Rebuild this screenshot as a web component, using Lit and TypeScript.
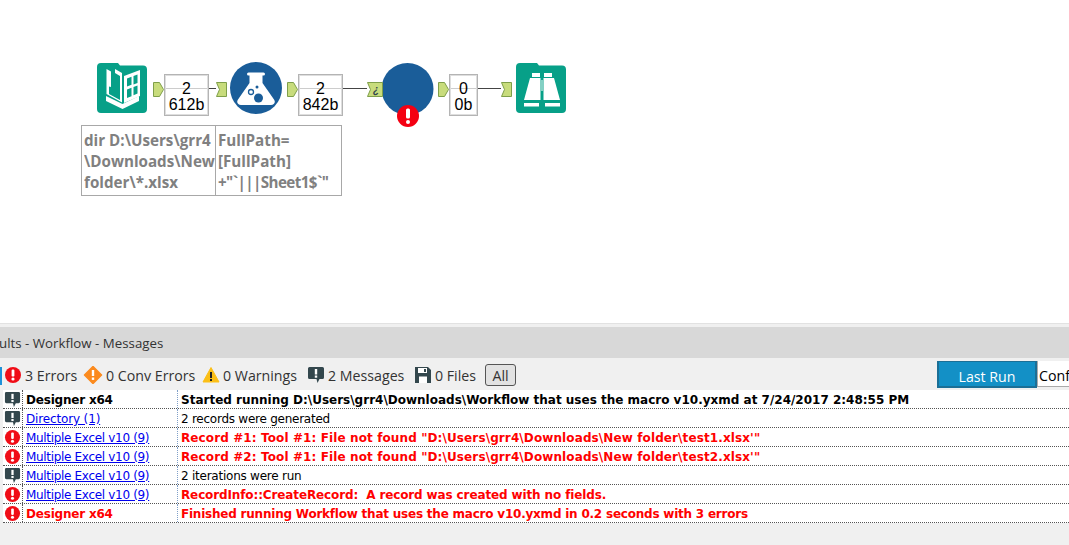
import { LitElement, html, css, svg } from "lit";
import { customElement } from "lit/decorators.js";

const errorIcon = svg`<svg class="ico" width="18" height="18" viewBox="0 0 18 18"><circle cx="9" cy="9" r="8" fill="#f00d17"/><rect x="7.6" y="3.6" width="2.8" height="7" rx="1.2" fill="#fff"/><circle cx="9" cy="13" r="1.6" fill="#fff"/></svg>`;
const msgIcon = svg`<svg class="ico" width="18" height="18" viewBox="0 0 18 18"><path d="M2.500 1h13A1.500 1.500 0 0 1 17 2.500v9a1.500 1.500 0 0 1-1.500 1.500H12.500L10.500 17 9.500 13H2.500A1.500 1.500 0 0 1 1 11.500v-9A1.500 1.500 0 0 1 2.500 1z" fill="#33474d"/><rect x="7.800" y="3" width="2.400" height="5.500" fill="#fff"/><rect x="7.800" y="9.500" width="2.400" height="2.200" fill="#fff"/></svg>`;
const diamondIcon = svg`<svg class="ico" width="20" height="18" viewBox="0 0 20 18"><path d="M10 0.500 18.500 9 10 17.500 1.500 9z" fill="#fb8a1e" stroke="#fb8a1e" stroke-width="1.500" stroke-linejoin="round"/><rect x="8.800" y="4" width="2.400" height="6" fill="#fff"/><rect x="8.800" y="11.500" width="2.400" height="2.400" fill="#fff"/></svg>`;
const warnIcon = svg`<svg class="ico" width="18" height="18" viewBox="0 0 18 18"><path d="M9 1.500 17 16H1z" fill="#fbbf16" stroke="#fbbf16" stroke-linejoin="round"/><rect x="8" y="6" width="2" height="6" fill="#222"/><rect x="8" y="13" width="2" height="2" fill="#222"/></svg>`;
const floppyIcon = svg`<svg class="ico" width="18" height="18" viewBox="0 0 18 18"><path d="M1 1h13l3 3v13H1z" fill="#33474d"/><rect x="4" y="2" width="9" height="5" fill="#fff"/><rect x="10" y="3" width="2" height="3" fill="#33474d"/><rect x="5" y="10.500" width="8" height="6.500" fill="#fff"/></svg>`;

const outShape = svg`<svg width="11" height="15" viewBox="0 0 11 15"><path d="M.5.500h6l4 7-4 7h-6z" fill="#c8dc7c" stroke="#7f9f4a"/></svg>`;
const inShape = svg`<svg width="11" height="15" viewBox="0 0 11 15"><path d="M.5.500h10v14H.5l3-7z" fill="#c8dc7c" stroke="#7f9f4a"/></svg>`;
const inWide = svg`<svg width="16" height="15" viewBox="0 0 16 15"><path d="M.5.500h15v14H.5l3-7z" fill="#c8dc7c" stroke="#7f9f4a"/><text x="6" y="11" font-size="10" font-weight="700" font-style="italic" font-family="Liberation Sans" fill="#33474d">¿</text></svg>`;

const cardPath = "M5 1h17l2 2.500h23a4 4 0 0 1 4 4V47a4 4 0 0 1-4 4H5a4 4 0 0 1-4-4V5a4 4 0 0 1 4-4z";

const rows = [
  { icon: "m", tool: "Designer x64", link: false, cls: "b", tls: -0.2, ls: 0, text: "Started running D:\\Users\\grr4\\Downloads\\Workflow that uses the macro v10.yxmd at 7/24/2017 2:48:55 PM" },
  { icon: "m", tool: "Directory (1)", link: true, cls: "", tls: -0.15, ls: -0.25, text: "2 records were generated" },
  { icon: "e", tool: "Multiple Excel v10 (9)", link: true, cls: "r", tls: -0.32, ls: 0.11, text: "Record #1: Tool #1: File not found \"D:\\Users\\grr4\\Downloads\\New folder\\test1.xlsx'\"" },
  { icon: "e", tool: "Multiple Excel v10 (9)", link: true, cls: "r", tls: -0.32, ls: 0.11, text: "Record #2: Tool #1: File not found \"D:\\Users\\grr4\\Downloads\\New folder\\test2.xlsx'\"" },
  { icon: "m", tool: "Multiple Excel v10 (9)", link: true, cls: "", tls: -0.32, ls: -0.24, text: "2 iterations were run" },
  { icon: "e", tool: "Multiple Excel v10 (9)", link: true, cls: "r", tls: -0.32, ls: -0.125, text: "RecordInfo::CreateRecord:\u00a0 A record was created with no fields." },
  { icon: "e", tool: "Designer x64", link: false, cls: "r", tls: -0.2, ls: -0.22, text: "Finished running Workflow that uses the macro v10.yxmd in 0.2 seconds with 3 errors" },
];

const anchors = [
  { x: 153, shape: outShape },
  { x: 216, shape: inShape },
  { x: 287, shape: outShape },
  { x: 367, shape: inWide },
  { x: 438, shape: outShape },
  { x: 501, shape: inShape },
];
const counts = [
  { x: 164, w: 45, a: "2", b: "612b" },
  { x: 298, w: 45, a: "2", b: "842b" },
  { x: 449, w: 29, a: "0", b: "0b" },
];
const wires = [
  { x: 208, w: 8 },
  { x: 342, w: 25 },
  { x: 477, w: 24 },
];

@customElement("app-root")
export class AppRoot extends LitElement {
  static styles = css`
    :host { display: block; width: 1069px; height: 545px; overflow: hidden; background: #f0f0f0; font-family: "Open Sans", "Noto Sans", sans-serif; color: #222; }
    .canvas { position: relative; height: 323px; background: #fff; overflow: hidden; }
    .tool { position: absolute; display: block; }
    .book { left: 96px; top: 62px; }
    .flask { left: 230px; top: 62px; }
    .macro { left: 381px; top: 62px; }
    .bino { left: 515px; top: 62px; }
    .wire { position: absolute; top: 88px; height: 1px; background: #444; }
    .count { position: absolute; height: 42px; top: 74px; box-sizing: border-box; border: 1px solid #b4b4b4; box-shadow: inset 0 0 0 1px #dedede; font: 16px/16px "Liberation Sans", sans-serif; color: #000; text-align: center; padding-top: 6px; background: linear-gradient(#0000 13px, #ccc 13px, #ccc 14px, #0000 14px); }
    .anchor { position: absolute; top: 82px; display: block; height: 15px; }
    .anchor svg { display: block; }
    .note { position: absolute; top: 125px; height: 71px; box-sizing: border-box; border: 1px solid #a8a8a8; font: 700 15.2px/21px "Open Sans", sans-serif; color: #808080; padding: 4px 0 0 2px; overflow: hidden; }
    .note span { display: block; white-space: nowrap; }
    .note .tight { letter-spacing: -0.6px; }
    .n1 { left: 81px; width: 145px; border-right: none; }
    .n1 .clip { width: 133px; overflow: hidden; }
    .n2 { left: 215px; width: 127px; }
    .divider { height: 4px; background: #f0f0f0; border-top: 1px solid #e2e2e2; box-sizing: border-box; }
    .title { height: 31px; background: #d8d8d8; display: flex; align-items: center; font-size: 13.3px; color: #333; white-space: nowrap; overflow: hidden; }
    .title span { margin-left: -1px; }
    .toolbar { position: relative; height: 32px; box-sizing: border-box; padding: 6px 0 0 4px; display: flex; align-items: flex-start; font-size: 14.2px; color: #333; white-space: nowrap; }
    .toolbar .accent { position: absolute; left: 0; top: 9px; width: 2px; height: 18px; background: #1e90d8; }
    .item { display: flex; align-items: center; gap: 3px; height: 21px; }
    .item span { position: relative; top: 1px; }
    .i1 { width: 79px; }
    .i2 { width: 119px; }
    .i3 { width: 105px; }
    .i4 { width: 107px; }
    .i5 { width: 62px; }
    .ico { display: block; flex: none; }
    .all { box-sizing: border-box; height: 22px; width: 31px; margin-left: 9px; border: 1px solid #555; border-radius: 3px; background: #e2e2e2; text-align: center; line-height: 21px; }
    .spacer { flex: 1; }
    .lastrun { box-sizing: border-box; width: 100px; height: 27px; margin-top: -3px; background: #1390c6; border: 2px solid #1b6f96; border-top-width: 1px; color: #fff; text-align: center; line-height: 30px; }
    .conf { box-sizing: border-box; width: 32px; height: 26px; margin-top: -3px; background: #fff; border-bottom: 1px solid #aaa; border-left: 1px solid #aaa; color: #000; padding-left: 1px; line-height: 30px; overflow: hidden; }
    .table { margin-left: 3px; background: #fff; }
    .row { display: grid; grid-template-columns: 20px 155px 1fr; height: 19px; box-sizing: border-box; border-bottom: 1px dotted #555; font: 12px/18px "DejaVu Sans", sans-serif; white-space: nowrap; color: #000; }
    .cell { padding: 1px 0 0 3px; box-sizing: border-box; height: 18px; }
    .c0 { padding: 0; display: flex; align-items: center; justify-content: center; border-right: 1px dotted #555; }
    .c0 .ico { width: 17px; height: 17px; }
    .c1 { border-right: 1px dotted #7f9fc8; }
    .link { color: #0000ee; text-decoration: underline; }
    .b { font-weight: 700; }
    .r { font-weight: 700; color: #f00; }
  `;

  render() {
    return html`
      <div class="canvas">
        ${wires.map((w) => html`<div class="wire" style="left:${w.x}px;width:${w.w}px"></div>`)}
        <svg class="tool book" width="53" height="52" viewBox="0 0 53 52">
          <path d="${cardPath}" fill="#07a088"/>
          <path d="M10 34 26.500 42 43 34v5L26.500 47 10 39z" fill="#fff"/>
          <path d="M10.500 7 15 9.500V25l-2-.5V32l11 6V14l-5-3V7l7 4v29.500L10.500 32z" fill="#fff"/>
          <path d="M28 14 44 8v26l-16 7z" fill="#fff"/>
          <path d="M31 16.500l4.500-1.700v8l-4.500 1.800zM37.500 14l4-1.500v8.500l-4 1.500zM31 27.500l4.500-1.800v8.500L31 36zM37.500 25l4-1.500v8l-4 1.800z" fill="#07a088"/>
        </svg>
        <svg class="tool flask" width="53" height="53" viewBox="0 0 53 53">
          <circle cx="26" cy="26" r="26" fill="#1a5d99"/>
          <path d="M18.500 10.500h15a1.500 1.500 0 0 1 0 3H32.500V21L44 37.500c2 3 0 5.500-3 5.500H11c-3 0-5-2.500-3-5.500L19.500 21v-7.500h-1a1.500 1.500 0 0 1 0-3z" fill="#fff"/>
          <circle cx="21" cy="30" r="2.500" fill="none" stroke="#1a5d99" stroke-width="1.300"/>
          <circle cx="28.500" cy="36" r="4.500" fill="#1a5d99"/>
          <circle cx="27" cy="25" r="1.500" fill="#1a5d99"/>
        </svg>
        <svg class="tool macro" width="54" height="66" viewBox="0 0 54 66">
          <circle cx="26.500" cy="27" r="26" fill="#1a5d99"/>
          <circle cx="27" cy="54" r="11" fill="#f40012"/>
          <rect x="25" y="46.500" width="4" height="10" rx="1.500" fill="#fff"/>
          <circle cx="27" cy="60" r="2" fill="#fff"/>
        </svg>
        <svg class="tool bino" width="53" height="52" viewBox="0 0 53 52">
          <path d="${cardPath}" fill="#07a088"/>
          <path d="M17 11h8v4h-8zM29 11h8v4h-8z" fill="#fff"/>
          <path d="M15 16h10.500v22H9z" fill="#fff"/>
          <path d="M28.500 16H39l6 22H28.500z" fill="#fff"/>
          <path d="M26.500 18h1v11h-1z" fill="#fff"/>
          <path d="M9 41h15v3.500H9zM30 41h15v3.500H30z" fill="#fff"/>
        </svg>
        ${counts.map(
          (c) => html`<div class="count" style="left:${c.x}px;width:${c.w}px">${c.a}<br />${c.b}</div>`
        )}
        ${anchors.map((a) => html`<span class="anchor" style="left:${a.x}px">${a.shape}</span>`)}
        <div class="note n1"><div class="clip"><span>dir D:\\Users\\grr4</span><span>\\Downloads\\New</span><span>folder\\*.xlsx</span></div></div>
        <div class="note n2"><span>FullPath=</span><span>[FullPath]</span><span class="tight">+"\`|||Sheet1$\`"</span></div>
      </div>
      <div class="divider"></div>
      <div class="title"><span>ults - Workflow - Messages</span></div>
      <div class="toolbar">
        <div class="accent"></div>
        <div class="item i1">${errorIcon}<span>3 Errors</span></div>
        <div class="item i2">${diamondIcon}<span>0 Conv Errors</span></div>
        <div class="item i3">${warnIcon}<span>0 Warnings</span></div>
        <div class="item i4">${msgIcon}<span>2 Messages</span></div>
        <div class="item i5">${floppyIcon}<span>0 Files</span></div>
        <div class="all">All</div>
        <div class="spacer"></div>
        <div class="lastrun">Last Run</div>
        <div class="conf">Conf</div>
      </div>
      <div class="table">
        ${rows.map(
          (r) => html`<div class="row">
            <div class="cell c0">${r.icon === "e" ? errorIcon : msgIcon}</div>
            <div class="cell c1 ${r.link ? "" : r.cls}" style="letter-spacing:${r.tls}px">${r.link ? html`<span class="link">${r.tool}</span>` : r.tool}</div>
            <div class="cell ${r.cls}" style="letter-spacing:${r.ls}px">${r.text}</div>
          </div>`
        )}
      </div>
    `;
  }
}
